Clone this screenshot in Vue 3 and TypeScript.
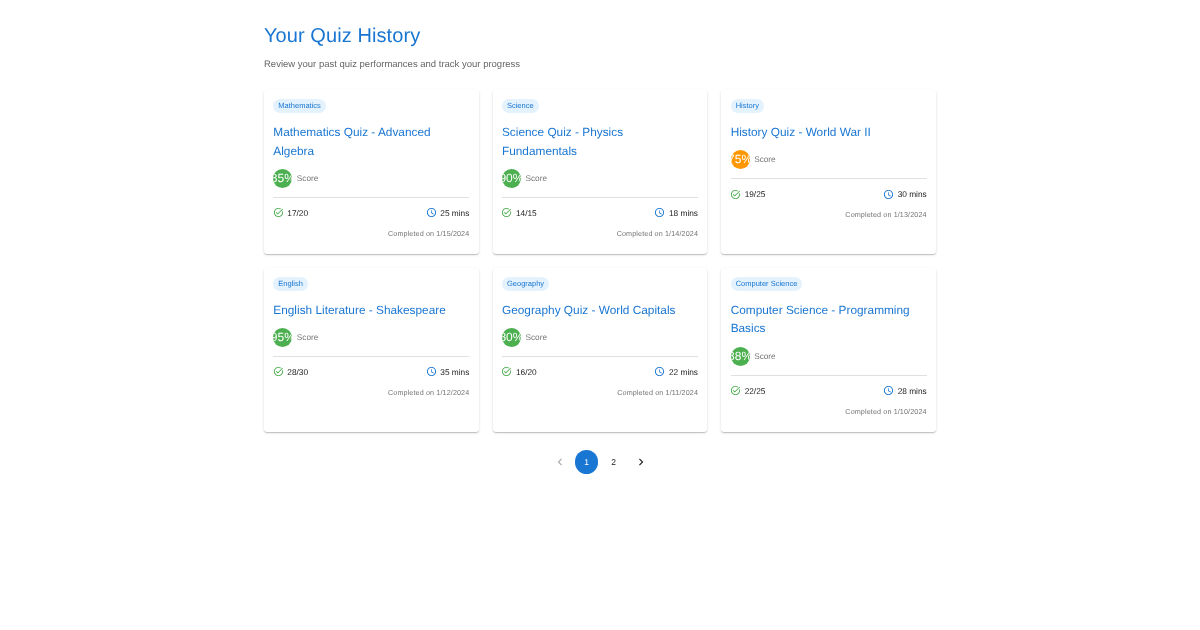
<template>
  <div class="page">
    <h1>Your Quiz History</h1>
    <p class="lead">Review your past quiz performances and track your progress</p>

    <div class="grid">
      <article v-for="q in quizzes" :key="q.title" class="card">
        <span class="chip">{{ q.category }}</span>
        <h2>{{ q.title }}</h2>
        <div class="score">
          <span class="avatar" :class="q.score >= 80 ? 'good' : 'ok'"><span>{{ q.score }}%</span></span>
          <span class="score-label">Score</span>
        </div>
        <div class="stats">
          <span class="stat">
            <svg class="check" viewBox="0 0 24 24"><path d="M22 5.18 10.59 16.6l-4.24-4.25 1.41-1.41 2.83 2.83 10-10L22 5.18zm-2.21 5.04c.13.57.21 1.17.21 1.78 0 4.42-3.58 8-8 8s-8-3.58-8-8 3.58-8 8-8c1.58 0 3.04.46 4.28 1.21l1.44-1.44C16.1 2.67 14.13 2 12 2 6.48 2 2 6.48 2 12s4.48 10 10 10 10-4.48 10-10c0-1.19-.22-2.33-.6-3.39l-1.61 1.61z" /></svg>
            {{ q.correct }}
          </span>
          <span class="stat">
            <svg class="clock" viewBox="0 0 24 24"><path d="M11.99 2C6.47 2 2 6.48 2 12s4.47 10 9.99 10C17.52 22 22 17.52 22 12S17.52 2 11.99 2zM12 20c-4.42 0-8-3.58-8-8s3.58-8 8-8 8 3.58 8 8-3.58 8-8 8zm.5-13H11v6l5.25 3.15.75-1.23-4.5-2.67z" /></svg>
            {{ q.time }}
          </span>
        </div>
        <div class="completed">Completed on {{ q.date }}</div>
      </article>
    </div>

    <nav class="pager">
      <span class="page-btn off"><svg viewBox="0 0 24 24"><path d="M15.41 7.41 14 6l-6 6 6 6 1.41-1.41L10.83 12z" /></svg></span>
      <span class="page-btn current">1</span>
      <span class="page-btn">2</span>
      <span class="page-btn"><svg viewBox="0 0 24 24"><path d="M10 6 8.59 7.41 13.17 12l-4.58 4.59L10 18l6-6z" /></svg></span>
    </nav>
  </div>
</template>

<script setup lang="ts">
interface Quiz {
  category: string
  title: string
  score: number
  correct: string
  time: string
  date: string
}

const quizzes: Quiz[] = [
  { category: 'Mathematics', title: 'Mathematics Quiz - Advanced Algebra', score: 85, correct: '17/20', time: '25 mins', date: '1/15/2024' },
  { category: 'Science', title: 'Science Quiz - Physics Fundamentals', score: 90, correct: '14/15', time: '18 mins', date: '1/14/2024' },
  { category: 'History', title: 'History Quiz - World War II', score: 75, correct: '19/25', time: '30 mins', date: '1/13/2024' },
  { category: 'English', title: 'English Literature - Shakespeare', score: 95, correct: '28/30', time: '35 mins', date: '1/12/2024' },
  { category: 'Geography', title: 'Geography Quiz - World Capitals', score: 80, correct: '16/20', time: '22 mins', date: '1/11/2024' },
  { category: 'Computer Science', title: 'Computer Science - Programming Basics', score: 88, correct: '22/25', time: '28 mins', date: '1/10/2024' }
]
</script>

<style>
body { background: #fff; }
</style>

<style scoped>
.page { width: 672px; margin: 0 auto; padding-top: 22px; font-family: "Liberation Sans", Arial, sans-serif; text-rendering: geometricPrecision; will-change: transform; }
h1 { margin: 0; color: #1976d2; font-size: 20px; font-weight: 400; line-height: 28px; letter-spacing: .08px; }
.lead { margin: 7px 0 0; color: #666; font-size: 9.5px; line-height: 16px; }
.grid { display: grid; grid-template-columns: repeat(3, minmax(0, 1fr)); gap: 14px; margin-top: 17px; }
.card { display: flex; flex-direction: column; align-items: flex-start; min-height: 163.75px; padding: 9.4px 9.3px 9.2px; box-sizing: border-box; border-radius: 3px; background: #fff; box-shadow: 0 1px 2px -1px rgba(0, 0, 0, .2), 0 1px 1px rgba(0, 0, 0, .14), 0 1px 3px rgba(0, 0, 0, .12); }
.chip { height: 14px; padding: 0 5px; border-radius: 7px; background: #e3f2fd; color: #1976d2; font-size: 7.5px; line-height: 14px; }
h2 { margin: 9.6px 0 8.5px; color: #1976d2; font-size: 11.85px; font-weight: 400; line-height: 18.75px; }
.score { display: flex; align-items: center; gap: 4.5px; margin-bottom: 9px; }
.avatar { display: flex; justify-content: center; width: 19px; height: 19px; overflow: hidden; border-radius: 50%; color: #fff; font-size: 12px; line-height: 19px; }
.avatar.good { background: #4caf50; }
.avatar.ok { background: #ff9800; }
.score-label { color: #757575; font-size: 8.25px; }
.stats { display: flex; align-items: center; justify-content: space-between; align-self: stretch; padding-top: 8px; border-top: 1px solid #e0e0e0; }
.stat { display: flex; align-items: center; gap: 3.5px; color: #212121; font-size: 8.3px; line-height: 14px; }
.stat svg { width: 11px; height: 11px; margin-left: -.5px; }
.check { fill: #4caf50; }
.clock { fill: #1976d2; }
.completed { align-self: flex-end; margin-top: 9px; color: #757575; font-size: 7.2px; line-height: 10px; letter-spacing: .12px; }
.pager { display: flex; justify-content: center; gap: 3.5px; margin-top: 18.75px; }
.page-btn { display: flex; align-items: center; justify-content: center; width: 23.5px; height: 23.5px; border-radius: 50%; color: #212121; font-size: 8.5px; }
.page-btn svg { width: 14px; height: 14px; fill: #212121; }
.page-btn.off svg { fill: #aaa; }
.page-btn.current { background: #1976d2; color: #fff; }
</style>
